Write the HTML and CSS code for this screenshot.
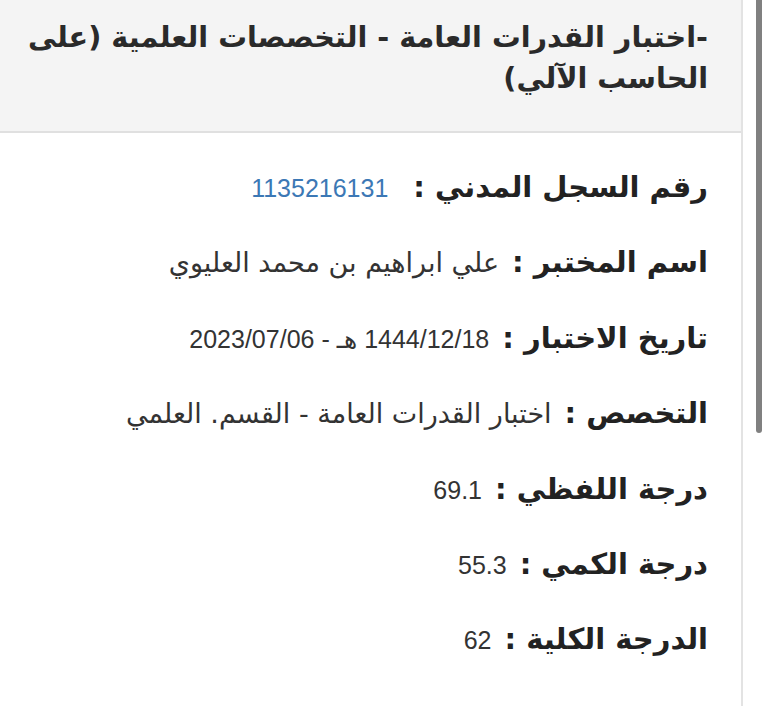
FILE: index.html
```html
<!DOCTYPE html>
<html lang="ar" dir="rtl">
<head>
<meta charset="utf-8">
<link rel="stylesheet" href="styles.css">
</head>
<body>
<div class="page">
  <div class="card">
    <div class="card-header">
      <h2 class="title">-اختبار القدرات العامة - التخصصات العلمية (على الحاسب الآلي)</h2>
    </div>
    <div class="card-body">
      <div class="row"><span class="label">رقم السجل المدني :</span><span class="value num link">1135216131</span></div>
      <div class="row"><span class="label">اسم المختبر :</span><span class="value ar">علي ابراهيم بن محمد العليوي</span></div>
      <div class="row"><span class="label">تاريخ الاختبار :</span><span class="value num">1444/12/18 <span class="ar">هـ</span> - 2023/07/06</span></div>
      <div class="row"><span class="label">التخصص :</span><span class="value ar">اختبار القدرات العامة - القسم. العلمي</span></div>
      <div class="row"><span class="label">درجة اللفظي :</span><span class="value num">69.1</span></div>
      <div class="row"><span class="label">درجة الكمي :</span><span class="value num">55.3</span></div>
      <div class="row"><span class="label">الدرجة الكلية :</span><span class="value num">62</span></div>
    </div>
  </div>
  <div class="scroll-thumb"></div>
</div>
</body>
</html>
```
FILE: styles.css
```css
html, body {
  margin: 0;
  padding: 0;
  background: #ffffff;
  height: 100%;
  overflow: hidden;
}
body {
  font-family: "DejaVu Sans", "Noto Sans", sans-serif;
  color: #222;
}
.page {
  display: flex;
  direction: ltr;
  height: 706px;
}
.card {
  direction: rtl;
  width: 743px;
  flex: none;
  border-right: 2px solid #e3e3e3;
  box-sizing: border-box;
  background: #fff;
  height: 706px;
}
.card-header {
  background: #f4f4f4;
  border-bottom: 2px solid #e0e0e0;
  height: 133px;
  box-sizing: border-box;
  padding: 17px 33px 0 10px;
}
.title {
  margin: 0;
  font-size: 28.7px;
  line-height: 41px;
  font-weight: bold;
  color: #2a2a2a;
}
.card-body {
  padding: 37px 33px 0 10px;
}
.row {
  display: flex;
  align-items: baseline;
  height: 75.4px;
}
.label {
  font-size: 29px;
  font-weight: bold;
  color: #222;
  margin-left: 13px;
  white-space: nowrap;
}
.value {
  font-family: "Liberation Sans", "DejaVu Sans", sans-serif;
  font-size: 25px;
  color: #333;
  white-space: nowrap;
}
.value.ar {
  font-family: "DejaVu Sans", sans-serif;
  font-size: 27px;
}
.value .ar {
  font-family: "DejaVu Sans", sans-serif;
  font-size: 25px;
}
.link {
  color: #3c78b5;
  margin-right: 12px;
}
.scroll-thumb {
  position: fixed;
  left: 756px;
  top: 0;
  width: 6px;
  height: 433px;
  background: #808080;
  border-radius: 0 0 3px 3px;
}
```
